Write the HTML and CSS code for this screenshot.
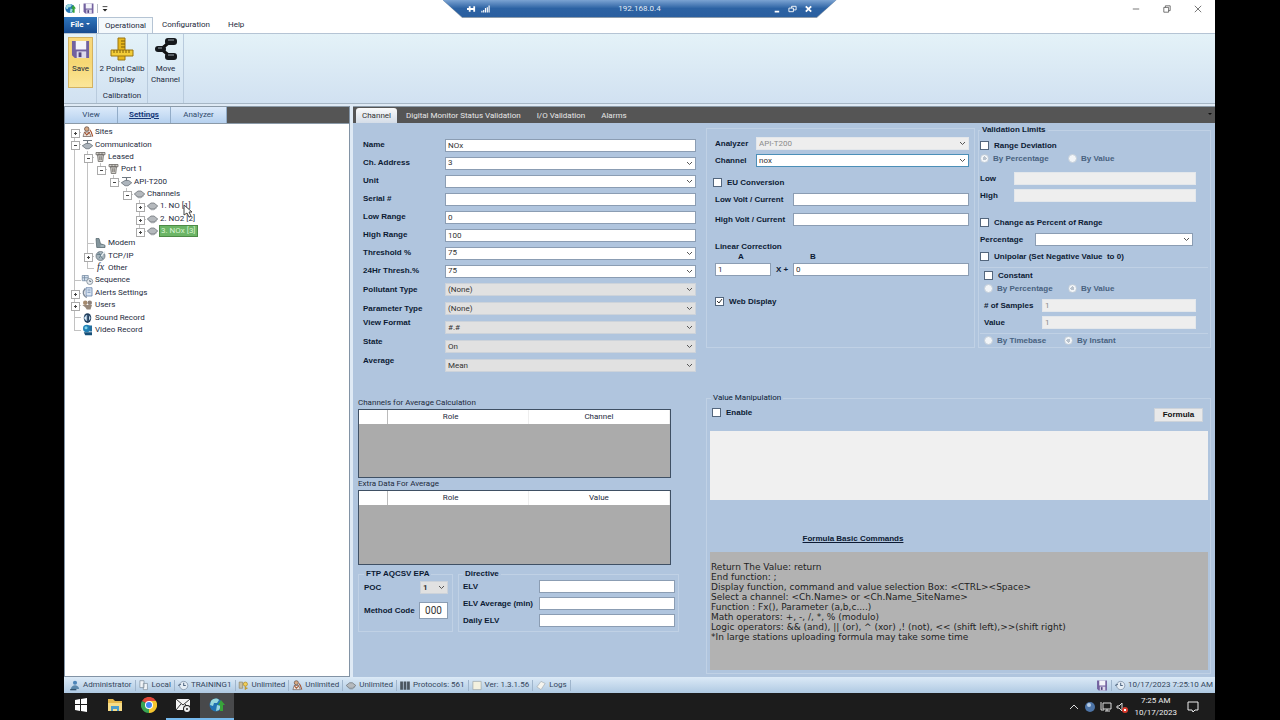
FILE: index.html
```html
<!DOCTYPE html>
<html lang="en">
<head>
    <meta charset="UTF-8" />
    <meta name="viewport" content="width=device-width, initial-scale=1" />
    <title>Channel settings</title>
    <link rel="stylesheet" href="styles.css">
</head>
<body>

    <!-- Shared icons -->
    <svg class="sprite" aria-hidden="true">
        <symbol id="i-globe" viewBox="0 0 16 16">
            <circle cx="7" cy="8" r="6.5" fill="#2374b4" />
            <path d="M2 4c3-3 6-3 8-1L8 6 5 6 4 9 1 8zM8 8l4 1-2 4-3 1z" fill="#9ad8dc" />
            <path d="M12 3l4 5h-2v6h-3V8H9z" fill="#37a43a" />
        </symbol>
        <symbol id="i-save" viewBox="0 0 20 20">
            <path d="M1 1h18v18H4l-3-3z" fill="#72619f" />
            <path d="M5 1h11v9H5z" fill="#f4f4fa" />
            <path d="M6 12h10v7H6z" fill="#ddd9ec" />
            <path d="M8 13h3v5H8z" fill="#54457f" />
        </symbol>
        <symbol id="i-people" viewBox="0 0 16 16">
            <circle cx="7" cy="4" r="3" fill="#d8a983" stroke="#5d4a42" />
            <path d="M2 14l2-6h6l3 6z" fill="#eee7df" stroke="#6e5f5b" />
            <path d="M4 8l3 4 4-4M11 5l2 3 2 6" fill="none" stroke="#a5522f" stroke-width="1.5" />
        </symbol>
        <symbol id="i-plug" viewBox="0 0 16 16">
            <path d="M2 2h12M8 2v4" stroke="#6f7880" stroke-width="1.5" />
            <path d="M1 9l5-3h5l4 3-5 4H6z" fill="#adb5bd" stroke="#646d76" />
        </symbol>
        <symbol id="i-chip" viewBox="0 0 16 16">
            <path d="M1 8l5-4h4l5 4-5 4H6z" fill="#b5b9bd" stroke="#6b7075" />
            <path d="M3 10l3 3h4l4-3" fill="none" stroke="#8b9095" />
        </symbol>
        <symbol id="i-port" viewBox="0 0 16 16">
            <path d="M2 2h12v3H2zM4 5h8l-1 9H5z" fill="#cfcdc8" stroke="#66635f" />
            <path d="M6 2v3M10 2v3M7 7v5M9 7v5" stroke="#66635f" />
        </symbol>
        <symbol id="i-modem" viewBox="0 0 16 16">
            <path d="M2 2h4l2 7 6 2v3H3z" fill="#83959c" stroke="#56676e" />
            <path d="M8 12h5" stroke="#d6e2e6" />
        </symbol>
        <symbol id="i-net" viewBox="0 0 16 16">
            <circle cx="8" cy="8" r="6" fill="#a7b4bc" stroke="#647079" />
            <path d="M3 6h10M5 3l6 9M11 3l-5 8" stroke="#5a7480" />
            <path d="M9 8l5-6" stroke="#e8eef1" stroke-width="2" />
        </symbol>
        <symbol id="i-seq" viewBox="0 0 16 16">
            <path d="M1 2h8v7H1z" fill="#d4e0ec" stroke="#7288a0" />
            <path d="M1 5h8M4 2v7" stroke="#7288a0" />
            <circle cx="11" cy="10" r="4" fill="#e4e9ee" stroke="#72808e" />
            <path d="M11 8v2h2" fill="none" stroke="#4a5866" />
        </symbol>
        <symbol id="i-alert" viewBox="0 0 16 16">
            <path d="M6 1h8v11H6z" fill="#d9e5f3" stroke="#5875a3" />
            <path d="M8 4h4M8 7h4" stroke="#5875a3" />
            <path d="M5 2C1 6 2 12 7 14" fill="none" stroke="#7b8796" stroke-width="2" />
        </symbol>
        <symbol id="i-users" viewBox="0 0 16 16">
            <circle cx="5" cy="5" r="3" fill="#a58a6e" />
            <circle cx="11" cy="5" r="3" fill="#8c8078" />
            <path d="M1 8h13l-2 6H7L5 11z" fill="#97887a" />
        </symbol>
        <symbol id="i-key" viewBox="0 0 16 16">
            <path d="M1 3h5v9H1z" fill="#c8bfa4" stroke="#8d8466" />
            <circle cx="10" cy="6" r="3" fill="#f2cf57" stroke="#a8852a" />
            <path d="M10 9v5M10 12h3" stroke="#c09a33" stroke-width="2" />
        </symbol>
        <symbol id="i-sound" viewBox="0 0 16 16">
            <ellipse cx="8" cy="8" rx="5" ry="6.5" fill="#24405f" />
            <path d="M7 4v8l-3-3V7zM10 5c2 2 2 4 0 6" fill="#e3edf6" stroke="#9fc0dc" />
        </symbol>
        <symbol id="i-video" viewBox="0 0 16 16">
            <circle cx="7" cy="6" r="5" fill="#2080b5" />
            <circle cx="6" cy="5" r="2" fill="#7fd3ea" />
            <path d="M3 11h11v4H5z" fill="#164f78" />
            <path d="M10 2h4v8h-3z" fill="#256f9f" />
        </symbol>
        <symbol id="i-admin" viewBox="0 0 16 16">
            <circle cx="8" cy="4" r="3" fill="#4c84b8" />
            <path d="M2 13c1-7 11-7 12 0z" fill="#5b88ad" />
            <path d="M1 14h9" stroke="#33536f" stroke-width="2" />
        </symbol>
        <symbol id="i-docs" viewBox="0 0 16 16">
            <path d="M2 1h6v10H2zM7 5h6v9H7z" fill="#f1f4f7" stroke="#7f8d9b" />
        </symbol>
        <symbol id="i-page" viewBox="0 0 16 16">
            <path d="M2 2h12v12H2z" fill="#f4f1df" stroke="#9ba4a8" />
        </symbol>
        <symbol id="i-protocols" viewBox="0 0 16 16">
            <path d="M1 2h4v12H1zM6 2h4v12H6zM11 2h4v12h-4z" fill="#4b555f" />
        </symbol>
        <symbol id="i-scroll" viewBox="0 0 16 16">
            <path d="M2 10l6-8 6 3-6 9z" fill="#f5f4ee" stroke="#a4aeb5" />
        </symbol>
        <symbol id="i-clock" viewBox="0 0 16 16">
            <circle cx="9" cy="8" r="6" fill="#e5edf5" stroke="#71839a" />
            <path d="M9 4v4h3M1 8l4-2" fill="none" stroke="#506782" stroke-width="1.5" />
        </symbol>
    </svg>

    <div class="app">
        <header class="titlebar">
            <div class="quick">
                <svg><use href="#i-globe" /></svg>
                <span class="sep"></span>
                <svg><use href="#i-save" /></svg>
                <span class="sep"></span>
                <svg class="more" viewBox="0 0 10 10"><path d="M2 2h6" stroke="#222" /><path d="M2 5h6L5 8z" fill="#222" /></svg>
            </div>
            <div class="window-buttons">
                <button aria-label="Minimize"><svg viewBox="0 0 10 10"><path d="M1 5h8" /></svg></button>
                <button aria-label="Restore"><svg viewBox="0 0 10 10"><path d="M1 3h6v6H1zM3 3V1h6v6H7" /></svg></button>
                <button aria-label="Close"><svg viewBox="0 0 10 10"><path d="M1 1l8 8M9 1l-8 8" /></svg></button>
            </div>
        </header>

        <div class="remote-bar">
            <div class="remote-inner">
                <svg viewBox="0 0 10 8"><path d="M0 4h3M3 1v6M3 4h5M8 1v6" stroke="#fff" stroke-width="2" /></svg>
                <svg viewBox="0 0 10 8"><path d="M1 8V6M3 8V5M5 8V3M7 8V2M9 8V0" stroke="#fff" stroke-width="1.3" /></svg>
                <span class="remote-host">192.168.0.4</span>
                <svg viewBox="0 0 10 8"><path d="M3 7h5" stroke="#fff" stroke-width="2" /></svg>
                <svg class="wide" viewBox="0 0 10 8"><path d="M1 3h5v4H1zM4 3V1h5v4H6" stroke="#fff" fill="none" /></svg>
                <svg viewBox="0 0 10 8"><path d="M2 1l6 6M8 1L2 7" stroke="#fff" stroke-width="2" /></svg>
            </div>
        </div>

        <nav class="ribbon-tabs">
            <button class="file-button">File <span class="caret"></span></button>
            <button class="ribbon-tab active">Operational</button>
            <button class="ribbon-tab">Configuration</button>
            <button class="ribbon-tab">Help</button>
        </nav>

        <div class="ribbon">
            <div class="ribbon-group">
                <button class="tool tool-save">
                    <svg><use href="#i-save" /></svg>
                    Save
                </button>
            </div>
            <div class="ribbon-group group-calib">
                <button class="tool">
                    <svg viewBox="0 0 24 24">
                        <path d="M8 1h7v22H8z" fill="#e8b81c" stroke="#9a7410" />
                        <path d="M1 13h22v6H1z" fill="#f3cd39" stroke="#9a7410" />
                        <path d="M11 4h4M11 7h4M11 10h4M4 13v3M7 13v3M10 13v3M13 13v3M16 13v3M19 13v3" stroke="#7d5c08" />
                    </svg>
                    2 Point Calib<br>Display
                </button>
                <span class="group-name">Calibration</span>
            </div>
            <div class="ribbon-group group-move">
                <button class="tool">
                    <svg viewBox="0 0 24 24">
                        <path d="M17 4L7 12l10 8" fill="none" stroke="#111" stroke-width="3" />
                        <rect x="11" y="1" width="12" height="7" rx="3" fill="#15181c" />
                        <rect x="1" y="9" width="11" height="6" rx="3" fill="#15181c" />
                        <rect x="11" y="16" width="12" height="7" rx="3" fill="#15181c" />
                        <path d="M14 3h6M4 11h4M14 18h6" stroke="#9aa3ab" />
                    </svg>
                    Move<br>Channel
                </button>
            </div>
        </div>

        <div class="workspace">
            <aside class="sidebar">
                <nav class="side-tabs">
                    <button>View</button>
                    <button class="active">Settings</button>
                    <button>Analyzer</button>
                </nav>
                <ul class="tree">
                    <li><i class="join first plus"></i><svg><use href="#i-people" /></svg><span>Sites</span></li>
                    <li><i class="join minus"></i><svg><use href="#i-plug" /></svg><span>Communication</span></li>
                    <li><i class="line"></i><i class="join minus"></i><svg><use href="#i-port" /></svg><span>Leased</span></li>
                    <li><i class="line"></i><i class="line"></i><i class="join last minus"></i><svg><use href="#i-port" /></svg><span>Port 1</span></li>
                    <li><i class="line"></i><i class="line"></i><i></i><i class="join last minus"></i><svg><use href="#i-plug" /></svg><span>API-T200</span></li>
                    <li><i class="line"></i><i class="line"></i><i></i><i></i><i class="join last minus"></i><svg><use href="#i-chip" /></svg><span>Channels</span></li>
                    <li><i class="line"></i><i class="line"></i><i></i><i></i><i></i><i class="join plus"></i><svg><use href="#i-chip" /></svg><span>1. NO [1]</span>
                        <svg class="pointer" viewBox="0 0 10 14"><path d="M1 1v10l3-2 2 4 2-1-2-4h3z" fill="#fff" stroke="#444" /></svg></li>
                    <li><i class="line"></i><i class="line"></i><i></i><i></i><i></i><i class="join plus"></i><svg><use href="#i-chip" /></svg><span>2. NO2 [2]</span></li>
                    <li><i class="line"></i><i class="line"></i><i></i><i></i><i></i><i class="join last plus"></i><svg><use href="#i-chip" /></svg><span class="selected">3. NOx [3]</span></li>
                    <li><i class="line"></i><i class="join"></i><svg><use href="#i-modem" /></svg><span>Modem</span></li>
                    <li><i class="line"></i><i class="join plus"></i><svg><use href="#i-net" /></svg><span>TCP/IP</span></li>
                    <li><i class="line"></i><i class="join last"></i><em>fx</em><span>Other</span></li>
                    <li><i class="join"></i><svg><use href="#i-seq" /></svg><span>Sequence</span></li>
                    <li><i class="join plus"></i><svg><use href="#i-alert" /></svg><span>Alerts Settings</span></li>
                    <li><i class="join plus"></i><svg><use href="#i-users" /></svg><span>Users</span></li>
                    <li><i class="join"></i><svg><use href="#i-sound" /></svg><span>Sound Record</span></li>
                    <li><i class="join last"></i><svg><use href="#i-video" /></svg><span>Video Record</span></li>
                </ul>
            </aside>

            <main class="editor">
                <nav class="editor-tabs">
                    <button class="active">Channel</button>
                    <button>Digital Monitor Status Validation</button>
                    <button>I/O Validation</button>
                    <button>Alarms</button>
                    <span class="caret"></span>
                </nav>

                <div class="panes">
                    <div class="pane-left">
                        <div class="channel-form">
                            <div class="field"><label for="name">Name</label><input id="name" type="text" value="NOx"></div>
                            <div class="field"><label for="address">Ch. Address</label><select id="address"><option>3</option></select></div>
                            <div class="field"><label for="unit">Unit</label><select id="unit"><option></option></select></div>
                            <div class="field"><label for="serial">Serial #</label><input id="serial" type="text"></div>
                            <div class="field"><label for="low-range">Low Range</label><input id="low-range" type="text" value="0"></div>
                            <div class="field"><label for="high-range">High Range</label><input id="high-range" type="text" value="100"></div>
                            <div class="field"><label for="threshold">Threshold %</label><select id="threshold"><option>75</option></select></div>
                            <div class="field"><label for="threshold24">24Hr Thresh.%</label><select id="threshold24"><option>75</option></select></div>
                            <div class="field list"><label for="pollutant">Pollutant Type</label><select id="pollutant"><option>(None)</option></select></div>
                            <div class="field list"><label for="parameter">Parameter Type</label><select id="parameter"><option>(None)</option></select></div>
                            <div class="field list raised"><label for="format">View Format</label><select id="format"><option>#.#</option></select></div>
                            <div class="field list raised"><label for="state">State</label><select id="state"><option>On</option></select></div>
                            <div class="field list raised"><label for="average">Average</label><select id="average"><option>Mean</option></select></div>
                        </div>

                        <div class="grids">
                            <h3>Channels for Average Calculation</h3>
                            <div class="grid-box">
                                <table>
                                    <thead><tr><th class="row-head"></th><th class="role">Role</th><th>Channel</th></tr></thead>
                                </table>
                            </div>
                            <h3>Extra Data For Average</h3>
                            <div class="grid-box tall">
                                <table>
                                    <thead><tr><th class="row-head"></th><th class="role">Role</th><th>Value</th></tr></thead>
                                </table>
                            </div>
                        </div>

                        <div class="groups">
                            <fieldset class="ftp">
                                <legend>FTP AQCSV EPA</legend>
                                <div class="ftp-row"><label for="poc">POC</label><select id="poc" class="flat"><option>1</option></select></div>
                                <div class="ftp-row"><label for="method">Method Code</label><input id="method" type="text" value="000"></div>
                            </fieldset>
                            <fieldset class="directive">
                                <legend>Directive</legend>
                                <div class="dir-row"><label for="elv">ELV</label><input id="elv" type="text"></div>
                                <div class="dir-row"><label for="elv-avg">ELV Average (min)</label><input id="elv-avg" type="text"></div>
                                <div class="dir-row"><label for="elv-daily">Daily ELV</label><input id="elv-daily" type="text"></div>
                            </fieldset>
                        </div>
                    </div>

                    <div class="pane-right">
                        <div class="upper">
                            <fieldset class="analyzer">
                                <div class="row"><label class="w-short" for="analyzer">Analyzer</label><select id="analyzer" disabled><option>API-T200</option></select></div>
                                <div class="row gap-s"><label class="w-short" for="channel">Channel</label><select id="channel" class="focused"><option>nox</option></select></div>
                                <div class="row eu check"><input id="eu" type="checkbox"><label for="eu">EU Conversion</label></div>
                                <div class="row gap-s"><label class="w-long" for="low-volt">Low Volt / Current</label><input id="low-volt" type="text"></div>
                                <div class="row gap-m"><label class="w-long" for="high-volt">High Volt / Current</label><input id="high-volt" type="text"></div>
                                <div class="linear">
                                    <p>Linear Correction</p>
                                    <div class="linear-heads"><label for="lin-a">A</label><label for="lin-b">B</label></div>
                                    <div class="row"><input id="lin-a" class="short" type="text" value="1"><span class="times">X +</span><input id="lin-b" type="text" value="0"></div>
                                </div>
                                <div class="row web check"><input id="web" type="checkbox" checked><label for="web">Web Display</label></div>
                            </fieldset>

                            <fieldset class="limits">
                                <legend>Validation Limits</legend>
                                <div class="row check"><input id="deviation" type="checkbox"><label for="deviation">Range Deviation</label></div>
                                <div class="row radios">
                                    <input id="dev-pct" type="radio" name="dev" checked disabled><label for="dev-pct">By Percentage</label>
                                    <input id="dev-val" type="radio" name="dev" disabled><label for="dev-val">By Value</label>
                                </div>
                                <div class="row gap-m"><label class="w-low" for="low">Low</label><input id="low" type="text" disabled></div>
                                <div class="row gap-s"><label class="w-low" for="high">High</label><input id="high" type="text" disabled></div>
                                <div class="row gap-l check"><input id="change" type="checkbox"><label for="change">Change as Percent of Range</label></div>
                                <div class="row gap-s percent"><label class="w-pct" for="percentage">Percentage</label><select id="percentage"><option></option></select></div>
                                <div class="row gap-s check"><input id="unipolar" type="checkbox"><label for="unipolar">Unipolar (Set Negative Value&nbsp; to 0)</label></div>
                                <div class="constant">
                                    <div class="row check"><input id="constant" type="checkbox"><label for="constant">Constant</label></div>
                                    <div class="row radios">
                                        <input id="con-pct" type="radio" name="con" disabled><label for="con-pct">By Percentage</label>
                                        <input id="con-val" type="radio" name="con" checked disabled><label for="con-val">By Value</label>
                                    </div>
                                    <div class="row gap-s"><label class="w-samples" for="samples"># of Samples</label><input id="samples" type="text" value="1" disabled></div>
                                    <div class="row gap-s"><label class="w-samples" for="value">Value</label><input id="value" type="text" value="1" disabled></div>
                                </div>
                                <div class="timebase">
                                    <div class="row radios">
                                        <input id="by-time" type="radio" name="by" disabled><label for="by-time">By Timebase</label>
                                        <input id="by-inst" type="radio" name="by" checked disabled><label for="by-inst">By Instant</label>
                                    </div>
                                </div>
                            </fieldset>
                        </div>

                        <fieldset class="manipulation">
                            <legend>Value Manipulation</legend>
                            <div class="manip-head">
                                <div class="row check"><input id="enable" type="checkbox"><label for="enable">Enable</label></div>
                                <button class="formula-button">Formula</button>
                            </div>
                            <textarea aria-label="Formula" disabled></textarea>
                            <h4>Formula Basic Commands</h4>
                            <div class="commands">
                                <p>Return The Value: return</p>
                                <p>End function: ;</p>
                                <p>Display function, command and value selection Box: &lt;CTRL&gt;&lt;Space&gt;</p>
                                <p>Select a channel: &lt;Ch.Name&gt; or &lt;Ch.Name_SiteName&gt;</p>
                                <p>Function : Fx(), Parameter (a,b,c....)</p>
                                <p>Math operators: +, -, /, *, % (modulo)</p>
                                <p>Logic operators: &amp;&amp; (and), || (or), ^ (xor) ,! (not), &lt;&lt; (shift left),&gt;&gt;(shift right)</p>
                                <p>*In large stations uploading formula may take some time</p>
                            </div>
                        </fieldset>
                    </div>
                </div>
            </main>
        </div>

        <footer class="statusbar">
            <span><svg><use href="#i-admin" /></svg>Administrator</span>
            <span><svg><use href="#i-docs" /></svg>Local</span>
            <span><svg><use href="#i-clock" /></svg>TRAINING1</span>
            <span><svg><use href="#i-key" /></svg>Unlimited</span>
            <span><svg><use href="#i-people" /></svg>Unlimited</span>
            <span><svg><use href="#i-chip" /></svg>Unlimited</span>
            <span><svg><use href="#i-protocols" /></svg>Protocols: 561</span>
            <span><svg><use href="#i-page" /></svg>Ver: 1.3.1.56</span>
            <span><svg><use href="#i-scroll" /></svg>Logs</span>
            <span class="right"><svg><use href="#i-save" /></svg></span>
            <span><svg><use href="#i-clock" /></svg>10/17/2023 7:25:10 AM</span>
        </footer>

        <div class="taskbar">
            <button aria-label="Start"><svg viewBox="0 0 16 16"><path d="M2 3l5-1v5H2zM8 2l6-1v6H8zM2 8h5v6l-5-1zM8 8h6v7l-6-1z" fill="#fff" /></svg></button>
            <button aria-label="File Explorer"><svg viewBox="0 0 16 16"><path d="M1 2h5l2 2h7v10H1z" fill="#e6b84c" /><path d="M1 6h14v8H1z" fill="#f8dc86" /><path d="M4 9h8v5h-2v-2H6v2H4z" fill="#4d9ccb" /></svg></button>
            <button aria-label="Chrome"><svg viewBox="0 0 16 16"><path d="M8 8L1 4a8 8 0 0 1 14 0z" fill="#e1483a" /><path d="M8 8V4h7a8 8 0 0 1-7 12z" fill="#f5c52f" /><path d="M8 8L1 4a8 8 0 0 0 7 12z" fill="#39a452" /><circle cx="8" cy="8" r="4" fill="#fff" /><circle cx="8" cy="8" r="3" fill="#4285f4" /></svg></button>
            <button class="open" aria-label="Mail"><svg viewBox="0 0 16 16"><path d="M1 2h14v11H1z" fill="#f4f4f4" /><path d="M1 2l7 6 7-6M1 13l5-6M15 13l-5-6" fill="none" stroke="#333" /><circle cx="12" cy="12" r="4" fill="#1c1c1c" /><circle cx="12" cy="12" r="3" fill="#eee" /><circle cx="12" cy="12" r="1" fill="#222" /></svg></button>
            <button class="open current" aria-label="Channel settings"><svg><use href="#i-globe" /></svg></button>
            <div class="tray">
                <svg viewBox="0 0 12 12"><path d="M2 8l4-4 4 4" fill="none" stroke="#ddd" /></svg>
                <svg viewBox="0 0 12 12"><circle cx="6" cy="6" r="5" fill="#4d74a6" /><circle cx="5" cy="4" r="2" fill="#b7cde6" /></svg>
                <svg viewBox="0 0 12 12"><path d="M3 2h8v6H3zM5 10h5M7 8v2M1 1v8h3" fill="none" stroke="#ddd" /></svg>
                <svg viewBox="0 0 12 12"><path d="M1 5h2l3-3v8L3 7H1z" fill="none" stroke="#ddd" /><circle cx="9" cy="9" r="3" fill="#d83b2d" /><path d="M8 8l2 2M10 8l-2 2" stroke="#fff" /></svg>
                <div class="clock">7:25 AM<br>10/17/2023</div>
                <svg class="notes" viewBox="0 0 12 12"><path d="M1 1h10v8H8l-2 2-1-2H1z" fill="none" stroke="#eee" /></svg>
            </div>
        </div>
    </div>

</body>
</html>
```
FILE: styles.css
```css
* {
    box-sizing: border-box;
    margin: 0;
    padding: 0;
}

body {
    min-height: 100vh;
    padding: 0 65px 0 64px;
    background: #000;
    font-family: Roboto, Arial, sans-serif;
    font-size: 8px;
    line-height: 10px;
    color: #1d2a3c;
}

button,
input,
select,
textarea {
    font: inherit;
    color: inherit;
    border: 0;
    border-radius: 0;
    background: none;
}

.sprite {
    display: none;
}

.app {
    position: relative;
    display: flex;
    flex-direction: column;
    min-height: 100vh;
    background: #fff;
}

.caret {
    display: inline-block;
    border: 2px solid transparent;
    border-top-color: currentColor;
    border-bottom: 0;
}

/* Title bar */
.titlebar {
    display: flex;
    justify-content: space-between;
    height: 17px;
    padding-left: 1px;
}

.quick {
    display: flex;
    align-items: center;
    gap: 3px;
}

    .quick svg {
        width: 11px;
        height: 11px;
    }

    .quick .more {
        width: 8px;
        height: 8px;
    }

.sep {
    width: 1px;
    height: 9px;
    background: #b9bfc6;
}

.window-buttons {
    display: flex;
    padding-right: 2px;
}

    .window-buttons button {
        width: 31px;
        height: 17px;
        padding-top: 4px;
    }

    .window-buttons svg {
        width: 8px;
        height: 8px;
        fill: none;
        stroke: #555;
    }

.remote-bar {
    position: absolute;
    top: 0;
    left: 50%;
    width: 394px;
    height: 18px;
    transform: translateX(-50%);
    background: #8d9cac;
    clip-path: polygon(0 0, 100% 0, 95% 100%, 5% 100%);
}

.remote-inner {
    display: flex;
    align-items: center;
    gap: 5px;
    height: 17px;
    padding: 0 24px;
    background: linear-gradient(#7ba3d2, #2c62a3 50%, #2a5f9f);
    clip-path: polygon(0 0, 100% 0, 95% 100%, 5% 100%);
    color: #e5edf6;
}

    .remote-inner svg {
        width: 9px;
        height: 8px;
    }

.remote-host {
    flex: 1;
    padding-left: 18px;
    text-align: center;
}

.remote-inner .wide {
    margin: 0 2px;
}

/* Ribbon */
.ribbon-tabs {
    display: flex;
    height: 16px;
}

.file-button {
    width: 33px;
    background: linear-gradient(#2f76bd, #174b90);
    color: #fff;
    font-weight: bold;
}

    .file-button .caret {
        margin: 0 0 2px 1px;
    }

.ribbon-tab {
    padding: 0 9px;
}

    .ribbon-tab.active {
        padding: 0 6px;
        margin-left: 1px;
        border: 1px solid #b5c4d4;
        border-bottom: 0;
        background: #f4f9fc;
    }

.ribbon {
    display: flex;
    height: 71px;
    border-top: 1px solid #b5c4d4;
    border-bottom: 1px solid #a6b6c5;
    background: linear-gradient(#e4f2f8, #d1e1f1);
}

.ribbon-group {
    display: flex;
    flex-direction: column;
    justify-content: space-between;
    align-items: center;
    padding: 3px 3px 2px 4px;
    border-right: 1px solid #b9cbdd;
}

.group-calib {
    width: 51px;
    padding: 3px 0 2px;
}

.group-move {
    width: 36px;
    padding: 3px 0 2px;
}

.tool {
    display: flex;
    flex-direction: column;
    align-items: center;
    height: 51px;
    line-height: 11px;
    white-space: nowrap;
}

    .tool svg {
        width: 24px;
        height: 24px;
        margin-bottom: 2px;
    }

.tool-save {
    width: 25px;
    border: 1px solid #d3b261;
    background: linear-gradient(#f8d87c, #f6d774 50%, #fbe699);
}

    .tool-save svg {
        width: 19px;
        height: 19px;
        margin: 2px 0 4px;
    }

/* Work area */
.workspace {
    flex: 1;
    display: grid;
    grid-template-columns: 286px 1fr;
    gap: 3px;
    padding-top: 2px;
    background: #dfeaf5;
}

.sidebar {
    display: flex;
    flex-direction: column;
    background: #fff;
    border: 1px solid #8293a5;
    border-top-width: 0;
}

.side-tabs {
    display: flex;
    height: 18px;
    background: #555;
    border-top: 1px solid #8b9aa8;
    border-bottom: 1px solid #8b9aa8;
}

    .side-tabs button {
        width: 53px;
        background: linear-gradient(#dceafa, #b6d1ef);
        border-right: 1px solid #92acc8;
        color: #304a6c;
    }

        .side-tabs button.active {
            font-weight: bold;
            text-decoration: underline;
            color: #17397a;
        }

        .side-tabs button:last-child {
            width: 56px;
        }

.tree {
    display: flex;
    flex-direction: column;
    height: 212px;
    padding: 2px 0 0 3px;
    list-style: none;
}

    .tree li {
        position: relative;
        flex: 1;
        display: flex;
        align-items: center;
    }

    .tree i {
        position: relative;
        align-self: stretch;
        width: 13px;
    }

    .tree .line,
    .tree .join {
        background: linear-gradient(#c2c2c2, #c2c2c2) 6px 0 / 1px 100% no-repeat;
    }

    .tree .join.first {
        background-position: 6px 6px;
    }

    .tree .join.last {
        background-size: 1px 6px;
    }

    /* branch to the icon */
    .tree .join::before {
        content: "";
        position: absolute;
        top: 6px;
        left: 6px;
        width: 7px;
        height: 1px;
        background: #c2c2c2;
    }

    .tree .plus::after,
    .tree .minus::after {
        content: "";
        position: absolute;
        top: 3px;
        left: 3px;
        width: 7px;
        height: 7px;
        border: 1px solid #aaa;
        background: linear-gradient(#444, #444) center / 3px 1px no-repeat #fff;
    }

    .tree .plus::after {
        background: linear-gradient(#444, #444) center / 3px 1px no-repeat, linear-gradient(#444, #444) center / 1px 3px no-repeat #fff;
    }

    .tree svg,
    .tree em {
        width: 13px;
        height: 12px;
        font-family: "Liberation Serif", serif;
        font-size: 10px;
        text-align: center;
    }

    .tree span {
        padding: 0 1px;
    }

    .tree .selected {
        border: 1px solid #4c8a45;
        background: #6cb566;
        color: #d7f3d0;
    }

    .tree .pointer {
        position: absolute;
        top: 4px;
        left: 115px;
        z-index: 1;
        width: 10px;
        height: 14px;
    }

/* Channel editor */
.editor {
    display: flex;
    flex-direction: column;
    background: #b0c5de;
}

.editor-tabs {
    display: flex;
    height: 17px;
    padding: 1px 3px 0;
    background: #555;
    border-top: 1px solid #8b9aa8;
    color: #e8e8e8;
}

    .editor-tabs button {
        padding: 0 8px;
    }

        .editor-tabs button.active {
            margin-right: 1px;
            padding: 0 6px;
            border-radius: 3px 3px 0 0;
            background: linear-gradient(#fafafa, #d4dde8);
            color: #333;
        }

    .editor-tabs .caret {
        margin: 5px 0 0 auto;
        color: #111;
    }

.panes {
    display: grid;
    grid-template-columns: 353fr 509fr;
    flex: 1;
}

/* Controls */
label,
legend,
.linear p,
.times,
h4 {
    font-family: "Liberation Sans", Arial, sans-serif;
    font-weight: bold;
    color: #0c1a33;
    white-space: nowrap;
}

input[type="text"],
select {
    flex: 1;
    min-width: 0;
    height: 13px;
    padding: 0 2px;
    border: 1px solid #8b9db3;
    background-color: #fff;
    color: #333;
    opacity: 1;
}

select {
    appearance: none;
    background-image: url("data:image/svg+xml,%3Csvg xmlns='http://www.w3.org/2000/svg' width='7' height='5'%3E%3Cpath d='M1 1l2.500 2.500L6 1' fill='none' stroke='%23555'/%3E%3C/svg%3E");
    background-repeat: no-repeat;
    background-position: right 2px center;
}

    input[type="text"]:disabled,
    select:disabled {
        border-color: #e3e7eb;
        background-color: #eee;
        color: #8b8b8b;
    }

    select.focused {
        border-color: #4c8fb8;
    }

input[type="checkbox"],
input[type="radio"] {
    appearance: none;
    width: 9px;
    height: 9px;
    border: 1px solid #53667d;
    background: #fff;
}

input[type="checkbox"]:checked {
    background: #fff url("data:image/svg+xml,%3Csvg xmlns='http://www.w3.org/2000/svg' width='7' height='7'%3E%3Cpath d='M1 3l2 2 3-4' fill='none' stroke='%23333'/%3E%3C/svg%3E") center no-repeat;
}

input[type="radio"] {
    border-color: #c3ced9;
    border-radius: 50%;
    background: #f2f5f8;
}

    input[type="radio"]:checked {
        background: radial-gradient(circle, #b9c3ce 2px, #f2f5f8 2px);
    }

input[type="radio"] + label {
    color: #48627f;
}

fieldset {
    min-width: 0;
    border: 1px solid #c0d1e5;
}

legend {
    padding: 0 2px;
}

/* Left pane */
.pane-left {
    padding: 13px 10px 0 5px;
}

.channel-form {
    padding-left: 5px;
}

.field {
    display: flex;
    align-items: center;
    height: 18px;
}

    .field label {
        width: 82px;
    }

    .field.list {
        height: 19px;
    }

        .field.list select,
        select.flat {
            border-color: #cdd3da;
            background-color: #e1e1e1;
        }

    .field.raised label {
        align-self: flex-start;
    }

.grids {
    margin: 22px 25px 0 0;
}

    .grids h3 {
        font-size: 8px;
        font-weight: normal;
        line-height: 12px;
    }

.grid-box {
    height: 69px;
    border: 1px solid #3f5064;
    background: #ababab;
}

    .grid-box.tall {
        height: 75px;
    }

    .grid-box table {
        width: 100%;
        border-collapse: collapse;
        table-layout: fixed;
        background: #fff;
    }

    .grid-box th {
        height: 14px;
        border-right: 1px solid #eee;
        font-weight: normal;
    }

    .grid-box .row-head {
        width: 28px;
        border-color: #bbb;
    }

    .grid-box .role {
        padding-right: 14px;
    }

.groups {
    display: flex;
    gap: 5px;
    margin: 4px 17px 0 0;
}

.ftp {
    width: 95px;
    padding: 2px 4px 8px 5px;
}

.ftp-row {
    display: flex;
    align-items: center;
    justify-content: space-between;
}

    .ftp-row + .ftp-row {
        margin-top: 8px;
    }

    .ftp-row select {
        flex: none;
        width: 28px;
        font-weight: bold;
    }

    .ftp-row input[type="text"] {
        flex: none;
        width: 29px;
        height: 17px;
        font-size: 10px;
        text-align: center;
    }

.directive {
    flex: 1;
    padding: 1px 3px 0 4px;
}

.dir-row {
    display: flex;
    align-items: center;
    margin-bottom: 4px;
}

    .dir-row label {
        width: 76px;
    }

/* Right pane */
.pane-right {
    padding: 2px 4px 0 0;
}

.upper {
    display: grid;
    grid-template-columns: 269fr 233fr;
    gap: 3px;
}

.row {
    display: flex;
    align-items: center;
    height: 13px;
}

.gap-s {
    margin-top: 4px;
}

.gap-m {
    margin-top: 7px;
}

.gap-l {
    margin-top: 14px;
}

.check label {
    margin-left: 5px;
}

.analyzer {
    margin-top: 3px;
    padding: 8px 5px 0 8px;
}

.analyzer .eu {
    margin: 9px 0 0 -2px;
}

.w-short {
    width: 41px;
}

.w-long {
    width: 78px;
}

.linear {
    margin-top: 16px;
}

.linear-heads {
    display: grid;
    grid-template-columns: 78px 1fr;
    margin-bottom: 1px;
}

    .linear-heads label {
        padding-left: 23px;
    }

    .linear-heads label + label {
        padding-left: 17px;
    }

.linear .short {
    flex: none;
    width: 56px;
}

.times {
    width: 22px;
    text-align: center;
}

.analyzer .web {
    margin-top: 19px;
}

.limits {
    padding: 4px 2px 0 1px;
}

    .limits > .row {
        padding-right: 12px;
    }

    .limits > .percent {
        padding-right: 15px;
    }

.radios input:first-child + label {
    width: 75px;
    margin-left: 4px;
}

.radios label {
    margin-left: 4px;
}

.w-low {
    width: 34px;
}

.w-pct {
    width: 55px;
}

.w-samples {
    width: 58px;
}

.constant,
.timebase {
    margin-top: 4px;
    padding: 1px 12px 0 4px;
    border-top: 1px solid #c0d1e5;
}

.constant .radios input:first-child + label {
    width: 71px;
}

.timebase {
    padding-top: 0;
}

    .timebase .radios input:first-child + label {
        width: 67px;
    }

/* Value manipulation */
.manipulation {
    margin-top: 45px;
    padding: 3px 2px 3px 3px;
}

    .manipulation > legend {
        margin-left: 1px;
        font-family: inherit;
        font-weight: normal;
    }

.manip-head {
    display: flex;
    justify-content: space-between;
    padding: 0 5px 0 2px;
}

.formula-button {
    width: 49px;
    height: 14px;
    margin-top: 2px;
    border: 1px solid #cdd3da;
    background: #e9e9e9;
    color: #111;
    font-family: "Liberation Sans", Arial, sans-serif;
    font-weight: bold;
}

.manipulation textarea {
    display: block;
    width: 100%;
    height: 69px;
    margin-top: 9px;
    background: #f0f0f0;
    resize: none;
}

h4 {
    width: 286px;
    margin: 34px 0 8px;
    font-size: 8px;
    text-align: center;
    text-decoration: underline;
}

.commands {
    min-height: 118px;
    padding: 10px 1px;
    background: #b2b2b2;
    color: #222;
    font-family: "DejaVu Sans", Verdana, sans-serif;
    font-size: 9px;
}

/* Status bar */
.statusbar {
    display: flex;
    align-items: center;
    height: 16px;
    padding: 0 2px 0 3px;
    background: linear-gradient(#dceaf7, #afc9e2);
    color: #34465c;
}

    .statusbar span {
        display: flex;
        align-items: center;
        gap: 2px;
        padding: 0 3px 0 2px;
        border-right: 1px solid #9fb5cc;
    }

        .statusbar span:last-child {
            border: 0;
            padding-right: 0;
        }

    .statusbar svg {
        width: 12px;
        height: 11px;
    }

    .statusbar .right {
        margin-left: auto;
    }

/* Taskbar */
.taskbar {
    display: flex;
    height: 27px;
    background: #1c1c1c;
    color: #eee;
}

    .taskbar button {
        width: 34px;
        padding-top: 2px;
        border-bottom: 2px solid transparent;
    }

    .taskbar .open {
        border-color: #76b9ed;
    }

    .taskbar .current {
        background: #48494b;
    }

    .taskbar button svg {
        width: 16px;
        height: 16px;
    }

.tray {
    display: flex;
    align-items: center;
    gap: 4px;
    margin-left: auto;
    padding-right: 16px;
}

    .tray svg {
        width: 12px;
        height: 12px;
    }

.clock {
    padding: 0 6px 0 2px;
    line-height: 12px;
    text-align: center;
}
```
